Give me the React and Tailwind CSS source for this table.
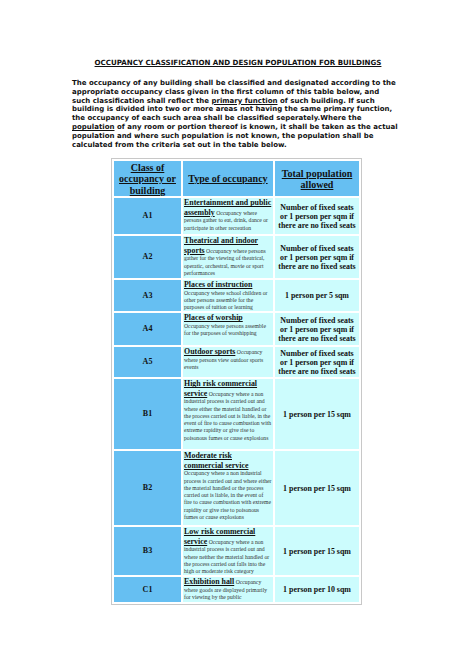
import React from "react";

const NFS = ["Number of fixed seats", "or 1 person per sqm if", "there are no fixed seats"];

const rows = [
  { c: "A1", t: "Entertainment and public assembly", d: "Occupancy where persons gather to eat, drink, dance or participate in other recreation", p: NFS, h: "h-[36px]", inline: true },
  { c: "A2", t: "Theatrical and indoor sports", d: "Occupancy where persons gather for the viewing of theatrical, operatic, orchestral, movie or sport performances", p: NFS, h: "h-[42px]", inline: true },
  { c: "A3", t: "Places of instruction", d: "Occupancy where school children or other persons assemble for the purposes of tuition or learning", p: ["1 person per 5 sqm"], h: "h-[31px]", inline: false },
  { c: "A4", t: "Places of worship", d: "Occupancy where persons assemble for the purposes of worshipping", p: NFS, h: "h-[32px]", inline: false },
  { c: "A5", t: "Outdoor sports", d: "Occupancy where persons view outdoor sports events", p: NFS, h: "h-[30px]", inline: true },
  { c: "B1", t: "High risk commercial service", d: "Occupancy where a non industrial process is carried out and where either the material handled or the process carried out is liable, in the event of fire to cause combustion with extreme rapidity or give rise to poisonous fumes or cause explosions", p: ["1 person per 15 sqm"], h: "h-[70px]", inline: true },
  { c: "B2", t: "Moderate risk commercial service", d: "Occupancy where a non industrial process is carried out and where either the material handled or the process carried out is liable, in the event of fire to cause combustion with extreme rapidity or give rise to poisonous fumes or cause explosions", p: ["1 person per 15 sqm"], h: "h-[74px]", inline: false },
  { c: "B3", t: "Low risk commercial service", d: "Occupancy where a non industrial process is carried out and where neither the material handled or the process carried out falls into the high or moderate risk category", p: ["1 person per 15 sqm"], h: "h-[47px]", inline: true },
  { c: "C1", t: "Exhibition hall", d: "Occupancy where goods are displayed primarily for viewing by the public", p: ["1 person per 10 sqm"], h: "h-[25px]", inline: true },
];

export default function App() {
  return (
    <div className="w-[474px] h-[669px] bg-white overflow-hidden">
      <div className="pt-[58px] pl-[72px]">
        <div className="w-[332px] text-center text-[7.1px] font-bold underline text-[#111] leading-[9px] font-['DejaVu_Sans',sans-serif]">
          OCCUPANCY CLASSIFICATION AND DESIGN POPULATION FOR BUILDINGS
        </div>
        <p className="mt-[12px] text-[7px] font-bold text-[#111] leading-[8.8px] font-['DejaVu_Sans',sans-serif] w-[327px]">
          The occupancy of any building shall be classified and designated according to the appropriate occupancy class given in the first column of this table below, and such classification shall reflect the <span className="underline">primary function</span> of such building. If such building is divided into two or more areas not having the same primary function, the occupancy of each such area shall be classified seperately.Where the <span className="underline">population</span> of any room or portion thereof is known, it shall be taken as the actual population and where such population is not known, the population shall be calculated from the criteria set out in the table below.
        </p>
      </div>
      <div className="mt-[9px] ml-[111px] w-[251px]">
        <table className="table-fixed w-full border-separate border-spacing-[2px] border border-[#c8c8c8] font-['Liberation_Serif',serif] text-[#111]">
          <colgroup>
            <col className="w-[67px]" />
            <col className="w-[90px]" />
            <col className="w-[84px]" />
          </colgroup>
          <thead>
            <tr className="h-[35px]">
              <th className="bg-[#66bff2] text-[10px] leading-[11.3px] font-bold underline align-middle px-[1px]">Class of occupancy or building</th>
              <th className="bg-[#66bff2] text-[10px] leading-[11.3px] font-bold underline align-middle">Type of occupancy</th>
              <th className="bg-[#66bff2] text-[10px] leading-[11.3px] font-bold underline align-middle">Total population allowed</th>
            </tr>
          </thead>
          <tbody>
            {rows.map((r) => (
              <tr key={r.c} className={r.h}>
                <td className="bg-[#66bff2] text-center text-[8px] font-bold align-middle">{r.c}</td>
                <td className="bg-[#ccfcfd] align-top px-[1px] pt-[0px] text-[5.7px] leading-[7.2px] overflow-hidden">
                  <span className="text-[7.9px] leading-[9.5px] font-bold underline">{r.t}</span>
                  {r.inline ? " " : <br />}
                  <span className="text-[#333]">{r.d}</span>
                </td>
                <td className="bg-[#ccfcfd] text-center text-[7.9px] leading-[9px] font-bold align-middle px-[1px] whitespace-nowrap">
                  {r.p.map((line) => (
                    <div key={line}>{line}</div>
                  ))}
                </td>
              </tr>
            ))}
          </tbody>
        </table>
      </div>
    </div>
  );
}
